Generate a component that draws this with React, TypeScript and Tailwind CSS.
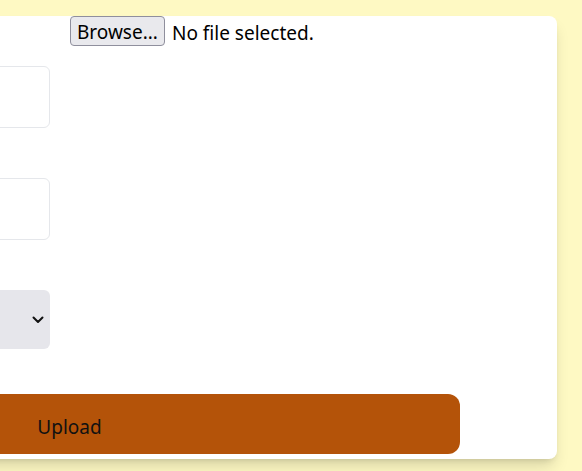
import React from "react";

const font = { fontFamily: '"Noto Sans", "Open Sans", Arial, sans-serif' };

export default function App() {
  return (
    <div className="h-[471px] overflow-hidden bg-[#fef9c3] pt-4" style={font}>
      <div className="-ml-[353px] w-[910px] h-[443px] rounded-lg bg-white shadow-lg shadow-[#00000026] px-8">
        <div className="flex h-[30px] items-center gap-[7px] pl-[391px]">
          <button className="h-[30px] rounded-[4px] border border-[#8f8f9d] bg-[#e9e9ed] px-[6px] pt-[3px] text-[19px] leading-none text-black">
            Browse...
          </button>
          <span className="pt-[4px] text-[19px] leading-none text-black">No file selected.</span>
        </div>

        <div className="mt-[20px] h-[62px] w-[371px] rounded-md border border-gray-200 bg-white" />
        <div className="mt-[50px] h-[62px] w-[371px] rounded-md border border-gray-200 bg-white" />

        <div className="mt-[50px] flex h-[59px] w-[371px] items-center justify-end rounded-md bg-[#e6e6eb] pr-[6px]">
          <svg width="12" height="8" viewBox="0 0 12 8" fill="none">
            <path d="M1.5 1.5 L6 6 L10.5 1.5" stroke="#111" strokeWidth="2" strokeLinecap="round" strokeLinejoin="round" />
          </svg>
        </div>

        <button className="mt-[45px] flex h-[60px] w-[781px] items-center justify-center rounded-xl bg-[#b45309] pt-[6px] text-[19px] text-[#111]">
          Upload
        </button>
      </div>
    </div>
  );
}
